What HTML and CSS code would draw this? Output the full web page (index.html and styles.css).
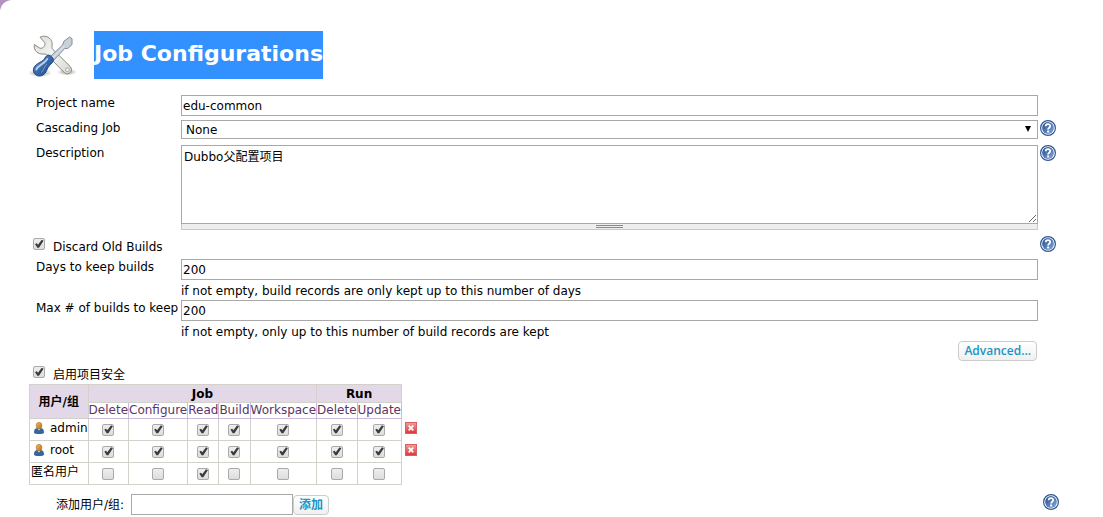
FILE: index.html
```html
<!DOCTYPE html>
<html lang="en">
<head>
    <meta charset="UTF-8">
    <meta name="viewport" content="width=device-width, initial-scale=1.0">
    <title>edu-common Config</title>
    <link rel="stylesheet" href="styles.css">
</head>
<body>

<!-- shared icons -->
<svg class="sprite" aria-hidden="true">
    <defs>
        <linearGradient id="helpFill" x1="0" y1="0" x2="1" y2="1">
            <stop offset="0" stop-color="#1f4a8c"/>
            <stop offset="1" stop-color="#86aadb"/>
        </linearGradient>
        <linearGradient id="headFill" x1="0" y1="0" x2="1" y2="1">
            <stop offset="0" stop-color="#f3c168"/>
            <stop offset="1" stop-color="#b8690c"/>
        </linearGradient>
        <linearGradient id="redFill" x1="0" y1="0" x2="0" y2="1">
            <stop offset="0" stop-color="#efa09c"/>
            <stop offset="1" stop-color="#d93535"/>
        </linearGradient>
    </defs>
    <symbol id="help" viewBox="0 0 16 16">
        <circle cx="8" cy="8" r="7.4" fill="#fff" stroke="#2f5592" stroke-width="1.2"/>
        <circle cx="8" cy="8" r="5.9" fill="url(#helpFill)"/>
        <path d="M5.7 6.3C5.7 3.4 10.3 3.5 10.2 6.1C10.2 7.7 8.1 7.7 8.1 9.4" fill="none" stroke="#fff" stroke-width="1.8"/>
        <rect x="7.1" y="10.5" width="2" height="2" fill="#fff"/>
    </symbol>
    <symbol id="person" viewBox="0 0 12 12">
        <path d="M1.5 11C1 7.5 2.5 6 6 6S11 7.5 10.5 11C8 12.2 4 12.2 1.5 11Z" fill="#3465a4" stroke="#204a87" stroke-width=".6"/>
        <path d="M4.4 6.2L6 8.6L7.6 6.2Z" fill="#e8eef6"/>
        <ellipse cx="6" cy="3.6" rx="2.9" ry="3.3" fill="url(#headFill)" stroke="#a96a1c" stroke-width=".5"/>
    </symbol>
    <symbol id="remove" viewBox="0 0 12 12">
        <rect x=".5" y=".5" width="11" height="11" fill="url(#redFill)" stroke="#d9605e"/>
        <path d="M3.7 3.7L8.3 8.3M8.3 3.7L3.7 8.3" stroke="#fff" stroke-width="1.7"/>
    </symbol>
</svg>

<main class="main-panel">
    <header class="page-title">
        <svg class="tools-icon" viewBox="0 0 48 48" aria-hidden="true">
            <defs>
                <linearGradient id="steel" x1="0" y1="0" x2="1" y2="1">
                    <stop offset="0" stop-color="#dcdcd8"/>
                    <stop offset=".5" stop-color="#f5f5f3"/>
                    <stop offset="1" stop-color="#d3d3cf"/>
                </linearGradient>
                <linearGradient id="handle" x1="0" y1="0" x2="1" y2="1">
                    <stop offset="0" stop-color="#7fa6d6"/>
                    <stop offset=".45" stop-color="#3c6db0"/>
                    <stop offset="1" stop-color="#1d4482"/>
                </linearGradient>
                <radialGradient id="shadow">
                    <stop offset="0" stop-color="#000" stop-opacity=".4"/>
                    <stop offset="1" stop-color="#000" stop-opacity="0"/>
                </radialGradient>
            </defs>
            <ellipse cx="11" cy="42" rx="12" ry="4" fill="url(#shadow)"/>
            <ellipse cx="38" cy="41" rx="10" ry="3.5" fill="url(#shadow)"/>
            <path d="M11 6.2C17.5 3 24.5 8 23 15.5C22.8 16.8 23 17.6 24 18.6L41.2 35.4C45 40 39.8 45 35.6 41.9L18.6 24.6C17.4 23.3 16.5 22.8 15 23C9 23.8 4.2 19.5 5.4 13.6L10.8 17.2C14.4 18 17 14.2 15.6 11.4Z" fill="url(#steel)" stroke="#888a85"/>
            <circle cx="38.5" cy="38.8" r="1.9" fill="#f5f5f3" stroke="#a5a7a2"/>
            <path d="M35 10.2L40.6 6L43 7.6V13.6L38.7 17.6L35.8 17.4L25.2 28.8L21.6 25.4L33.6 14Z" fill="#c8d1da" stroke="#7f8d9b"/>
            <path d="M23.5 27L35.4 15.1" fill="none" stroke="#e6ebef" stroke-width="1"/>
            <path d="M18 24.4C20.4 22.8 25.4 27.2 24.2 30.2C23.2 32.6 20.8 33.6 19 36.6C17.5 39.4 17 42.2 13.8 44.2C9.4 46.4 4.2 44 4.4 38.8C4.7 32.8 13 31.4 15.4 28C16.2 26.6 16.8 25.2 18 24.4Z" fill="url(#handle)" stroke="#204a87"/>
            <path d="M7.4 38.5C8.3 34.6 14.7 33.6 18.3 28" fill="none" stroke="#b7cde9" stroke-width="2" stroke-linecap="round"/>
            <path d="M12.5 41.5C14.5 39.5 14.8 35.8 18 33" fill="none" stroke="#7398c8" stroke-width="1"/>
        </svg>
        <h1><mark>Job Configurations</mark></h1>
    </header>

    <form class="config-form" action="#" method="post">
        <div class="row">
            <label for="name">Project name</label>
            <input class="text" type="text" id="name" name="name" value="edu-common">
        </div>
        <div class="row">
            <label for="cascading">Cascading Job</label>
            <div class="select-box">
                <select id="cascading" name="cascading">
                    <option>None</option>
                </select>
            </div>
            <a class="help" href="#" aria-label="Help"><svg><use href="#help"/></svg></a>
        </div>
        <div class="row">
            <label for="description">Description</label>
            <div class="area">
                <textarea id="description" name="description">Dubbo父配置项目</textarea>
                <div class="area-handle"><span></span></div>
            </div>
            <a class="help" href="#" aria-label="Help"><svg><use href="#help"/></svg></a>
        </div>

        <div class="check-row">
            <input type="checkbox" id="discard" name="discard" checked>
            <label for="discard">Discard Old Builds</label>
            <a class="help" href="#" aria-label="Help"><svg><use href="#help"/></svg></a>
        </div>
        <div class="row retention">
            <label for="days">Days to keep builds</label>
            <div>
                <input class="text" type="text" id="days" name="days" value="200">
                <p class="note">if not empty, build records are only kept up to this number of days</p>
            </div>
        </div>
        <div class="row retention">
            <label for="max">Max # of builds to keep</label>
            <div>
                <input class="text" type="text" id="max" name="max" value="200">
                <p class="note">if not empty, only up to this number of build records are kept</p>
            </div>
        </div>
        <div class="advanced">
            <button class="btn" type="button">Advanced...</button>
        </div>

        <div class="check-row security">
            <input type="checkbox" id="security" name="security" checked>
            <label for="security">启用项目安全</label>
        </div>
        <table class="matrix">
            <thead>
                <tr class="groups">
                    <th class="user-head" rowspan="2">用户/组</th>
                    <th colspan="5">Job</th>
                    <th colspan="2">Run</th>
                </tr>
                <tr class="perms">
                    <th>Delete</th>
                    <th>Configure</th>
                    <th>Read</th>
                    <th>Build</th>
                    <th>Workspace</th>
                    <th>Delete</th>
                    <th>Update</th>
                </tr>
            </thead>
            <tbody>
                <tr>
                    <td class="user"><svg><use href="#person"/></svg>admin</td>
                    <td><input type="checkbox" aria-label="admin Job Delete" checked></td>
                    <td><input type="checkbox" aria-label="admin Job Configure" checked></td>
                    <td><input type="checkbox" aria-label="admin Job Read" checked></td>
                    <td><input type="checkbox" aria-label="admin Job Build" checked></td>
                    <td><input type="checkbox" aria-label="admin Job Workspace" checked></td>
                    <td><input type="checkbox" aria-label="admin Run Delete" checked></td>
                    <td><input type="checkbox" aria-label="admin Run Update" checked></td>
                    <td class="remove"><a href="#" aria-label="Remove admin"><svg><use href="#remove"/></svg></a></td>
                </tr>
                <tr>
                    <td class="user"><svg><use href="#person"/></svg>root</td>
                    <td><input type="checkbox" aria-label="root Job Delete" checked></td>
                    <td><input type="checkbox" aria-label="root Job Configure" checked></td>
                    <td><input type="checkbox" aria-label="root Job Read" checked></td>
                    <td><input type="checkbox" aria-label="root Job Build" checked></td>
                    <td><input type="checkbox" aria-label="root Job Workspace" checked></td>
                    <td><input type="checkbox" aria-label="root Run Delete" checked></td>
                    <td><input type="checkbox" aria-label="root Run Update" checked></td>
                    <td class="remove"><a href="#" aria-label="Remove root"><svg><use href="#remove"/></svg></a></td>
                </tr>
                <tr>
                    <td class="user">匿名用户</td>
                    <td><input type="checkbox" aria-label="匿名用户 Job Delete"></td>
                    <td><input type="checkbox" aria-label="匿名用户 Job Configure"></td>
                    <td><input type="checkbox" aria-label="匿名用户 Job Read" checked></td>
                    <td><input type="checkbox" aria-label="匿名用户 Job Build"></td>
                    <td><input type="checkbox" aria-label="匿名用户 Job Workspace"></td>
                    <td><input type="checkbox" aria-label="匿名用户 Run Delete"></td>
                    <td><input type="checkbox" aria-label="匿名用户 Run Update"></td>
                </tr>
            </tbody>
        </table>
        <div class="add-user">
            <label for="newuser">添加用户/组:</label>
            <input class="text" type="text" id="newuser" name="newuser">
            <button class="btn" type="button">添加</button>
            <a class="help" href="#" aria-label="Help"><svg><use href="#help"/></svg></a>
        </div>
    </form>
</main>

</body>
</html>
```

FILE: styles.css
```css
* {
    box-sizing: border-box;
}

body {
    margin: 0;
    background-color: #b093c1;
    color: #000;
    font-family: Verdana, "DejaVu Sans", "Noto Sans CJK SC", sans-serif;
    font-size: 12px;
    line-height: 16px;
}

.sprite {
    position: absolute;
    width: 0;
    height: 0;
}

.main-panel {
    min-height: 100vh;
    padding: 31px 46px 0 29px;
    background-color: #fff;
    border-top-left-radius: 12px;
}

.page-title {
    display: flex;
    gap: 17px;
    margin-bottom: 16px;
}

.tools-icon {
    width: 48px;
    height: 48px;
}

h1 {
    margin: 0;
    font-size: 22px;
    line-height: 46px;
}

mark {
    display: block;
    height: 48px;
    background-color: #3390ff;
    color: #fff;
}

.row {
    display: grid;
    grid-template-columns: 145px 1fr 17px;
    column-gap: 2px;
    align-items: start;
    padding-left: 5px;
    margin-bottom: 4px;
}

.row label {
    padding-left: 2px;
    white-space: nowrap;
}

input,
select,
textarea,
button {
    margin: 0;
    font-family: inherit;
    font-size: 12px;
    color: #000;
}

.text {
    display: block;
    width: 100%;
    height: 21px;
    padding: 0 1px;
    border: 1px solid #a9a9a9;
    background-color: #fff;
}

.select-box {
    position: relative;
    height: 21px;
}

.select-box select {
    display: block;
    appearance: none;
    width: 100%;
    height: 19px;
    padding: 0 4px;
    border: 1px solid #a9a9a9;
    border-radius: 0;
    background-color: #fff;
}

.select-box::after {
    content: "";
    position: absolute;
    top: 6px;
    right: 7px;
    border: 3px solid transparent;
    border-top: 6px solid #000;
    border-bottom: 0;
}

.area textarea {
    display: block;
    width: 100%;
    height: 79px;
    padding: 3px 2px;
    border: 1px solid #a9a9a9;
    border-radius: 0;
    line-height: 16px;
    resize: vertical;
}

.area-handle {
    display: flex;
    justify-content: center;
    height: 6px;
    border: 1px solid #cfc0e0;
    border-top: 0;
    background-color: #eee;
}

.area-handle span {
    width: 27px;
    height: 3px;
    margin-top: 1px;
    border-top: 1px solid #838f83;
    border-bottom: 1px solid #838f83;
}

.help {
    display: block;
    width: 16px;
    height: 16px;
}

.help svg {
    display: block;
    width: 16px;
    height: 16px;
}

.check-row {
    display: flex;
    align-items: center;
    gap: 8px;
    height: 16px;
    margin: 6px 0 7px;
    padding-left: 4px;
}

.check-row label {
    padding-top: 6px;
}

.check-row .help {
    margin-left: auto;
    margin-right: 1px;
}

.retention {
    margin-bottom: 0;
}

.note {
    margin: 3px 0 1px;
}

.advanced {
    display: flex;
    justify-content: flex-end;
    padding-right: 20px;
}

.btn {
    height: 20px;
    padding: 0 5px;
    border: 1px solid #ccc;
    border-radius: 4px;
    background: linear-gradient(#fff, #f0f0f0);
    color: #1c94c4;
    font-family: "Open Sans", "Noto Sans CJK SC", sans-serif;
    font-size: 12px;
    font-weight: 600;
    line-height: 16px;
    white-space: nowrap;
}

.security {
    margin: 3px 0 4px;
}

input[type="checkbox"] {
    appearance: none;
    display: block;
    flex: none;
    width: 12px;
    height: 12px;
    border: 1px solid #aaa;
    border-radius: 2px;
    background: linear-gradient(#eee, #ddd);
}

input[type="checkbox"]:checked::before {
    content: "";
    display: block;
    width: 10px;
    height: 10px;
    background-color: #3c3c3c;
    clip-path: polygon(10% 50%, 27% 43%, 40% 58%, 77% 8%, 96% 17%, 50% 88%, 33% 88%);
}

.matrix {
    border-collapse: collapse;
}

.matrix th,
.matrix td {
    height: 22px;
    padding: 0;
    border: 1px solid #d3d2ca;
    white-space: nowrap;
}

.matrix .groups th {
    height: 18px;
    background-color: #e3d8e8;
}

.matrix .perms th {
    height: 16px;
    border-bottom-color: #cdb9e0;
    border-right-color: #cdb9e0;
    color: #5c3566;
    font-weight: normal;
    line-height: 15px;
}

.matrix td input {
    margin: 0 auto;
}

.matrix .user {
    padding: 1px 0 0 1px;
    vertical-align: top;
}

.matrix .user svg {
    width: 12px;
    height: 12px;
    margin: 0 5px 0 2px;
    vertical-align: -2px;
}

.matrix .remove {
    padding: 3px 0 0 3px;
    border: 0;
    vertical-align: top;
}

.remove svg {
    display: block;
    width: 12px;
    height: 12px;
}

.add-user {
    display: flex;
    align-items: center;
    margin-top: 9px;
    padding-left: 27px;
}

.add-user label {
    margin-right: 7px;
}

.add-user .text {
    width: 162px;
}

.add-user .help {
    align-self: flex-start;
    margin-left: auto;
    margin-right: -2px;
}
```
